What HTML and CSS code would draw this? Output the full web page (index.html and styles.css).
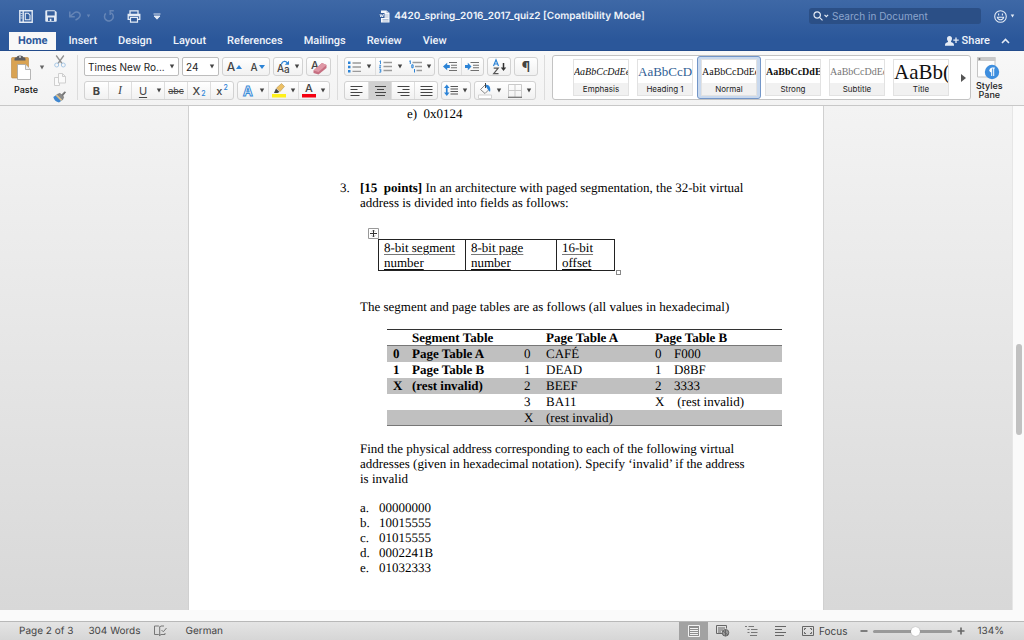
FILE: index.html
```html
<!DOCTYPE html>
<html lang="en">
<head>
<meta charset="utf-8">
<title>4420_spring_2016_2017_quiz2 [Compatibility Mode]</title>
<link rel="stylesheet" href="styles.css">
</head>
<body class="app">
<svg class="defs" width="0" height="0" aria-hidden="true">
  <symbol id="caret" viewBox="0 0 6 5"><path d="M0.8 0.5h4.4L3 4.5z" fill="currentColor"/></symbol>
</svg>

<header class="header">
  <div class="titlebar">
    <div class="quick">
      <button class="bare" aria-label="Document gallery"><svg width="14" height="13" viewBox="0 0 14 13" fill="none" stroke="#e4ebf5" stroke-width="1.4"><path d="M.8.8h12.4v11.4H.8zM4.2.8v11.4"/><path d="M6.3 3.2h2.9l1.8 1.9v4.7H6.3z" stroke-width="1.1"/><path d="M1.5 3.5h2M1.5 5.8h2M1.5 8h2" stroke-width=".8"/></svg></button>
      <button class="bare" aria-label="Save"><svg width="12" height="12" viewBox="0 0 12 12"><path d="M1.4.3h8.2L11.7 2v8.9a.8.8 0 0 1-.8.8H1.1a.8.8 0 0 1-.8-.8V1.3A1 1 0 0 1 1.4.3z" fill="#e4ebf5"/><path d="M2.2 1.2h7.5v4.2H2.2zM3 7.6h6v3.3H6.4V8.8H4.8v2.1H3z" fill="#365f9c"/></svg></button>
      <button class="bare dim" aria-label="Undo"><svg width="12" height="10" viewBox="0 0 12 10" fill="none" stroke="currentColor" stroke-width="1.5"><path d="M.8.5v5.200h5M1 5.500L5 2c2.500-1.800 6-.6 6.200 1.900.1 2-2 3.800-4.700 5.300"/></svg><svg width="5" height="4"><use href="#caret"/></svg></button>
      <button class="bare dim" aria-label="Repeat"><svg width="12" height="12" viewBox="0 0 12 12" fill="none" stroke="currentColor" stroke-width="1.500"><path d="M2.800 3.400a4.400 4.400 0 1 0 5.400-.6M10.800.8H7.200v4.200"/></svg></button>
      <button class="bare" aria-label="Print"><svg width="14" height="13" viewBox="0 0 14 13"><path d="M3 4V.8h8V4M1.200 4.300h11.600v5H1.200z" fill="none" stroke="#e4ebf5" stroke-width="1.300"/><path d="M1 4h12v2.300H1z" fill="#e4ebf5"/><path d="M3.500 7.500h7v4.700h-7z" fill="#315b9a" stroke="#e4ebf5" stroke-width="1.200"/></svg></button>
      <button class="bare" aria-label="Customize toolbar"><svg width="8" height="7" viewBox="0 0 8 7"><path d="M.5 1h7M1 3h6L4 6.200z" fill="#e4ebf5" stroke="#e4ebf5" stroke-width=".9"/></svg></button>
    </div>
    <h1 class="doc-title"><svg width="11" height="13" viewBox="0 0 11 13"><path d="M2 .5h5.500L10.500 3v9.500H2z" fill="#f4f7fb"/><path d="M7.500.5V3h3" fill="#aebfd8"/><path d="M5.500 5h4M5.500 7h4M3.500 9.500h6M3.500 11h6" stroke="#8fa5c4" stroke-width=".7"/><path d="M0 3h5.500v5H0z" fill="#315b9a"/><path d="M1 4l.8 3L2.700 4.600 3.600 7l.9-3" fill="none" stroke="#fff" stroke-width=".8"/></svg>4420_spring_2016_2017_quiz2 [Compatibility Mode]</h1>
    <div class="title-right">
      <label class="search"><svg width="16" height="10" viewBox="0 0 16 10" fill="none" stroke="#e4ebf5" stroke-width="1.200"><circle cx="4.200" cy="4" r="3.200"/><path d="M6.500 6.300l3 3M11.500 3.800l1.800 1.800 1.800-1.800"/></svg><input class="search-input" type="search" placeholder="Search in Document" aria-label="Search in Document"></label>
      <button class="bare smile" aria-label="Feedback"><svg width="13" height="13" viewBox="0 0 13 13" fill="none" stroke="#e4ebf5" stroke-width="1.100"><circle cx="6.500" cy="6.500" r="5.800"/><path d="M4.600 3.500v2M8.400 3.500v2M3.400 7.300c.8 3.200 5.400 3.200 6.200 0z"/></svg><svg width="5" height="4"><use href="#caret"/></svg></button>
    </div>
  </div>
  <nav class="tabs">
    <a class="tab tab-on" href="#home">Home</a><a class="tab" href="#insert">Insert</a><a class="tab" href="#design">Design</a><a class="tab" href="#layout">Layout</a><a class="tab" href="#references">References</a><a class="tab" href="#mailings">Mailings</a><a class="tab" href="#review">Review</a><a class="tab" href="#view">View</a>
    <button class="share"><svg width="14" height="10" viewBox="0 0 14 10"><path d="M4.500 0C6 0 7 1 7 2.600 7 4 6.300 4.800 6 5.200v.8c1.500.6 3 .9 3 3v.8H0V9c0-2.100 1.500-2.400 3-3v-.8C2.500 4.800 2 4 2 2.600 2 1 3 0 4.500 0z" fill="#e4ebf5"/><path d="M11 1.500v5.400M8.300 4.200h5.400" stroke="#e4ebf5" stroke-width="1.300"/></svg>Share</button>
    <button class="bare" aria-label="Collapse ribbon"><svg width="9" height="6" viewBox="0 0 9 6" fill="none" stroke="#e4ebf5" stroke-width="1.600"><path d="M1 5l3.500-3.500L8 5"/></svg></button>
  </nav>
</header>

<section class="ribbon" id="home" aria-label="Home">
  <div class="clip">
    <button class="paste"><svg width="20" height="25" viewBox="0 0 20 25"><rect x=".5" y="2.500" width="17" height="20.500" rx="1" fill="#d9a353" stroke="#bb8743" stroke-width=".6"/><path d="M3.500 5.500V3.800c0-.8.8-1.300 2-1.300C5.800-.2 12.200-.2 12.500 2.500c1.200 0 2 .5 2 1.300v1.700z" fill="#5b5c60"/><circle cx="9" cy="2" r=".9" fill="#ddd"/><path d="M6.500 9.500h8l5 5v10h-13z" fill="#fff" stroke="#a5a5a5" stroke-width=".8"/><path d="M14.500 9.500v5h5" fill="#eee" stroke="#a5a5a5" stroke-width=".8"/></svg>Paste</button>
    <button class="bare paste-more" aria-label="Paste options"><svg width="6" height="5"><use href="#caret"/></svg></button>
    <div class="clip-tools">
      <button class="bare" aria-label="Cut"><svg width="12" height="13" viewBox="0 0 12 13" fill="none"><path d="M2.200.5l5.800 8M9.800.5l-5.800 8" stroke="#929292" stroke-width="1.300"/><circle cx="2.700" cy="10" r="2" stroke="#a8c8e6"/><circle cx="9.300" cy="10" r="2" stroke="#a8c8e6"/></svg></button>
      <button class="bare" aria-label="Copy"><svg width="12" height="13" viewBox="0 0 12 13" fill="#fafafa" stroke="#cfcfcf"><path d="M.5 4.500h5v8h-5z"/><path d="M4.500.5h4l3 3v6.500h-7zM8.500.5v3h3"/></svg></button>
      <button class="bare" aria-label="Format painter"><svg width="13" height="12" viewBox="0 0 13 12"><path d="M8.500 4L11.800.7l.7.7L9.500 5" fill="#777" stroke="#666" stroke-width=".8"/><path d="M4 3.500l3-1.300 3.800 3.800L9.500 9z" fill="#8a8a8a" stroke="#666" stroke-width=".5"/><path d="M4 3.500L9.500 9 6 11.500C3 11 1 9 .3 6z" fill="#3f86cf"/><path d="M4 3.500L9.500 9 8 10 2.500 4.500z" fill="#e0c08a"/></svg></button>
    </div>
  </div>
  <div class="rows rule">
    <div class="row">
      <span class="combo combo-font"><select class="select" aria-label="Font"><option>Times New Ro...</option></select><svg class="combo-caret" width="6" height="5"><use href="#caret"/></svg></span>
      <span class="combo combo-size"><select class="select" aria-label="Font size"><option>24</option></select><svg class="combo-caret" width="6" height="5"><use href="#caret"/></svg></span>
      <div class="set"><button class="tool w23" aria-label="Grow font"><span class="glyph">A</span><svg width="6" height="4" viewBox="0 0 6 4"><path d="M0 4h6L3 0z" fill="#2b83d6"/></svg></button><button class="tool w23 plain" aria-label="Shrink font"><span class="glyph-s">A</span><svg width="6" height="4" viewBox="0 0 6 4"><path d="M0 0h6L3 4z" fill="#2b83d6"/></svg></button></div>
      <div class="set"><button class="tool w28" aria-label="Change case"><svg width="14" height="14" viewBox="0 0 14 14"><path d="M4.500 4C5.500.8 9 .8 10.300 3" fill="none" stroke="#2b83d6" stroke-width="1.300"/><path d="M12 .8v4H7.800z" fill="#2b83d6"/><text x="0" y="12" class="svg-text">A</text><text x="7" y="13" class="svg-text">a</text></svg><svg width="6" height="5"><use href="#caret"/></svg></button></div>
      <div class="set"><button class="tool w23" aria-label="Clear formatting"><svg width="18" height="16" viewBox="0 0 18 16"><text x="1" y="10" class="svg-text svg-text-l">A</text><path d="M3.500 11.500L12 4l4.500 2v3l-8 6.500-5-1.500z" fill="#c66f81"/><path d="M3.500 11.500L12 4l4.500 2-8 7z" fill="#df98a6"/></svg></button></div>
    </div>
    <div class="row">
      <div class="set"><button class="tool w23 bold">B</button><button class="tool w23 ital">I</button><button class="tool w23 und">U</button><button class="tool w10 plain" aria-label="Underline style"><svg width="6" height="5"><use href="#caret"/></svg></button><button class="tool w23 strike">abc</button><button class="tool w23 xs">X<span class="blue low">2</span></button><button class="tool w23 xs">x<span class="blue high">2</span></button></div>
      <div class="set"><button class="tool w30" aria-label="Text effects"><svg width="13" height="14" viewBox="0 0 13 14"><text x="1" y="12" class="fx">A</text></svg><svg width="6" height="5"><use href="#caret"/></svg></button><button class="tool w30" aria-label="Highlight"><svg width="14" height="15" viewBox="0 0 14 15"><path d="M0 11h14v3.500H0z" fill="#fff01c"/><path d="M2 10l2-4.500L7.500 9 5.500 10z" fill="#444"/><path d="M4.500 5L9.500.5l3 3L8 8.500z" fill="#edc064" stroke="#a98b4a" stroke-width=".5"/></svg><svg width="6" height="5"><use href="#caret"/></svg></button><button class="tool w31" aria-label="Font color"><svg width="14" height="15" viewBox="0 0 14 15"><path d="M0 11h14v3.500H0z" fill="#f5000f"/><text x="3" y="9" class="svg-text svg-text-l">A</text></svg><svg width="6" height="5"><use href="#caret"/></svg></button></div>
    </div>
  </div>
  <div class="rows rule">
    <div class="row">
      <div class="set"><button class="tool w30" aria-label="Bullets"><svg width="14" height="12" viewBox="0 0 14 12"><path d="M0 .5h2.500V3H0zM0 4.800h2.500v2.500H0zM0 9h2.500v2.500H0z" fill="#2b83d6"/><path d="M4.500 2H13M4.500 6H13M4.500 10.300H13" stroke="#9a9a9a" stroke-width="1.300"/></svg><svg width="6" height="5"><use href="#caret"/></svg></button><button class="tool w31" aria-label="Numbering"><svg width="14" height="13" viewBox="0 0 14 13"><path d="M.5 1.500L1.500.8V4M.3 5.300h1.500l-1.300 2.300H2M.3 9.200h1.500v3H.3M.8 10.700h1" fill="none" stroke="#2b83d6" stroke-width=".9"/><path d="M4.500 2.500H13M4.500 6.500H13M4.500 10.500H13" stroke="#9a9a9a" stroke-width="1.300"/></svg><svg width="6" height="5"><use href="#caret"/></svg></button><button class="tool w28 plain" aria-label="Multilevel list"><svg width="14" height="13" viewBox="0 0 14 13"><path d="M.3 1.300l1-.6V4M2.800 4.800h1.300v3H2.800zM5.500 9v3.500" fill="none" stroke="#2b83d6" stroke-width="1"/><path d="M3.500 2.500H13M6 6.500h7M7.500 10.500H13" stroke="#9a9a9a" stroke-width="1.300"/></svg><svg width="6" height="5"><use href="#caret"/></svg></button></div>
      <div class="set"><button class="tool w22 plain" aria-label="Decrease indent"><svg width="15" height="12" viewBox="0 0 15 12"><path d="M0 5.500L4.200 1.800V4h2.600v3H4.200v2.200z" fill="#2b83d6"/><path d="M6 1.500h8M8 4.200h6M8 6.800h6M6 9.500h8" stroke="#707070" stroke-width="1.100"/></svg></button><button class="tool w22" aria-label="Increase indent"><svg width="15" height="12" viewBox="0 0 15 12"><path d="M6.500 5.500L2.800 1.800V4H0v3h2.800v2.200z" fill="#2b83d6"/><path d="M5.500 1.500H14M8 4.200h6M8 6.800h6M5.500 9.500H14" stroke="#707070" stroke-width="1.100"/></svg></button></div>
      <div class="set"><button class="tool w22" aria-label="Sort"><svg width="15" height="16" viewBox="0 0 15 16"><path d="M1.500 7L4 .8 6.500 7M2.400 5h3.200" fill="none" stroke="#2b83d6" stroke-width="1.200"/><path d="M1.700 9.200h4.500l-4.500 5.500h4.800" fill="none" stroke="#555" stroke-width="1.200"/><path d="M11.500 4v6" stroke="#333" stroke-width="1.500"/><path d="M8.800 8.500h5.400l-2.700 3.500z" fill="#333"/></svg></button></div>
      <div class="set"><button class="tool w22 pil">¶</button></div>
    </div>
    <div class="row">
      <div class="set"><button class="tool w23" aria-label="Align left"><svg width="13" height="10" viewBox="0 0 13 10" stroke="#444" stroke-width="1"><path d="M.5.500h12M.5 3.500h7M.5 6.500h12M.5 9.500h9"/></svg></button><button class="tool w23 on" aria-label="Center"><svg width="13" height="10" viewBox="0 0 13 10" stroke="#444"><path d="M1 .5h11M3 3.500h7M1 6.500h11M2 9.500h9"/></svg></button><button class="tool w23" aria-label="Align right"><svg width="13" height="10" viewBox="0 0 13 10" stroke="#444"><path d="M.5.500h12M5.500 3.500h7M.5 6.500h12M3.500 9.500h9"/></svg></button><button class="tool w23" aria-label="Justify"><svg width="13" height="10" viewBox="0 0 13 10" stroke="#444"><path d="M.5.500h12M.5 3.500h12M.5 6.500h12M.5 9.500h12"/></svg></button></div>
      <div class="set"><button class="tool w28" aria-label="Line spacing"><svg width="15" height="13" viewBox="0 0 15 13"><path d="M0 4L2.800.5 5.500 4H3.600v4.500h1.900L2.800 12 0 8.500h1.900V4z" fill="#2b83d6"/><path d="M6.500 2.500H14M6.500 5H14M6.500 7.500H14M6.500 10H14" stroke="#555"/></svg><svg width="6" height="5"><use href="#caret"/></svg></button></div>
      <div class="set"><button class="tool w30" aria-label="Shading"><svg width="14" height="16" viewBox="0 0 14 16"><path d="M.5 12h13v3.500H.5z" fill="#fff" stroke="#d2d2d2"/><path d="M2.500 6.500L7 2l4.500 4L7 10.500z" fill="#fafafa" stroke="#888"/><path d="M7 2c4-1 6 2 5 7l-2.500-3z" fill="#2b83d6"/><path d="M7.500 0v5" stroke="#444"/></svg><svg width="6" height="5"><use href="#caret"/></svg></button><button class="tool w30 plain" aria-label="Borders"><svg width="14" height="14" viewBox="0 0 14 14" fill="none"><path d="M.5 13V.5h13V13M7 .5V13M.5 6.500h13" stroke="#c9c9c9"/><path d="M0 13.300h14" stroke="#777" stroke-width="1.300"/></svg><svg width="6" height="5"><use href="#caret"/></svg></button></div>
    </div>
  </div>
  <div class="styles rule">
    <div class="gallery">
      <button class="style"><span class="sample s-emph">AaBbCcDdEe</span><span class="cap">Emphasis</span></button>
      <button class="style"><span class="sample s-head">AaBbCcD</span><span class="cap">Heading 1</span></button>
      <button class="style style-on"><span class="sample">AaBbCcDdEe</span><span class="cap">Normal</span></button>
      <button class="style"><span class="sample s-strong">AaBbCcDdE</span><span class="cap">Strong</span></button>
      <button class="style"><span class="sample s-sub">AaBbCcDdEe</span><span class="cap">Subtitle</span></button>
      <button class="style"><span class="sample s-title">AaBb(</span><span class="cap">Title</span></button>
      <button class="bare more" aria-label="More styles"><svg width="5" height="8" viewBox="0 0 5 8"><path d="M0 0l5 4-5 4z" fill="#555"/></svg></button>
    </div>
    <button class="pane"><svg width="24" height="25" viewBox="0 0 24 25"><path d="M1.500 1.500h17.500v19.500H1.500z" fill="#fdfdfd" stroke="#c4c4c4"/><path d="M1 1h18.500v4H1z" fill="#c9c9c9"/><circle cx="3.500" cy="3" r="1" fill="#777"/><circle cx="16" cy="16" r="7.200" fill="#3e8ede"/><path d="M15.500 12h3.300M15.700 12v8M17.700 12v8" stroke="#fff" stroke-width="1"/><path d="M15.700 12a2.300 2.300 0 0 0 0 4.600z" fill="#fff"/></svg><span>Styles<br>Pane</span></button>
  </div>
</section>

<main class="work">
  <div class="canvas">
    <article class="page">
      <p class="answer">e)&ensp;0x0124</p>
      <div class="question"><span class="qnum">3.</span>
        <p class="para"><b>[15&nbsp; points]</b> In an architecture with paged segmentation, the 32-bit virtual<br>address is divided into fields as follows:</p>
      </div>
      <div class="fields-wrap">
        <svg class="handle" width="11" height="11" viewBox="0 0 11 11" fill="none"><path d="M.5.5h10v10H.5z" fill="#fff" stroke="#999"/><path d="M5.500 2v7M2 5.500h7" stroke="#333"/><path d="M4 3.500l1.500-1.500L7 3.500M4 7.500L5.500 9 7 7.500" stroke="#555" stroke-width=".7"/></svg>
        <table class="fields"><tbody><tr><td class="f1"><span class="u-soft">8-bit segment</span><br><span class="u-hard">number</span></td><td class="f2"><span class="u-soft">8-bit page</span><br><span class="u-hard">number</span></td><td class="f3"><span class="u-soft">16-bit</span><br><span class="u-hard">offset</span></td></tr></tbody></table>
        <span class="grip"></span>
      </div>
      <p class="para">The segment and page tables are as follows (all values in hexadecimal)</p>
      <table class="data">
        <colgroup><col class="c1"><col class="c2"><col class="c3"><col class="c4"><col class="c5"><col></colgroup>
        <thead><tr><th></th><th>Segment Table</th><th></th><th>Page Table A</th><th colspan="2">Page Table B</th></tr></thead>
        <tbody>
          <tr><th>0</th><th>Page Table A</th><td>0</td><td>CAFÉ</td><td>0</td><td>F000</td></tr>
          <tr><th>1</th><th>Page Table B</th><td>1</td><td>DEAD</td><td>1</td><td>D8BF</td></tr>
          <tr><th>X</th><th>(rest invalid)</th><td>2</td><td>BEEF</td><td>2</td><td>3333</td></tr>
          <tr><th></th><th></th><td>3</td><td>BA11</td><td>X</td><td>&nbsp;(rest invalid)</td></tr>
          <tr><th></th><th></th><td>X</td><td>(rest invalid)</td><td></td><td></td></tr>
        </tbody>
      </table>
      <p class="para">Find the physical address corresponding to each of the following virtual<br>addresses (given in hexadecimal notation). Specify ‘invalid’ if the address<br>is invalid</p>
      <div class="addresses">
        <span>a.</span><span>00000000</span>
        <span>b.</span><span>10015555</span>
        <span>c.</span><span>01015555</span>
        <span>d.</span><span>0002241B</span>
        <span>e.</span><span>01032333</span>
      </div>
    </article>
  </div>
  <div class="scroll"><span class="thumb"></span></div>
</main>
<div class="hscroll"></div>

<footer class="status">
  <span class="st-page">Page 2 of 3</span>
  <span class="st-words">304 Words</span>
  <button class="bare st-proof" aria-label="Proofing"><svg width="13" height="12" viewBox="0 0 13 12" fill="none" stroke="#777"><path d="M10 1H7L5.700 2 4.500 1H.5v8.500h4l1.200 1 1.300-1h4V8M5.700 2v9"/><path d="M7.500 5l1.800 1.800L12.500 3"/></svg></button>
  <span>German</span>
  <div class="views">
    <button class="view view-on" aria-label="Print layout"><svg width="12" height="12" viewBox="0 0 12 12"><path d="M.5.500h11v11H.5z" fill="#8d8d8d" stroke="#f2f2f2"/><path d="M2 3.500h8M2 5.500h8M2 7.500h8M2 9.500h8" stroke="#f2f2f2"/></svg></button>
    <button class="view" aria-label="Web layout"><svg width="14" height="12" viewBox="0 0 14 12" fill="none" stroke="#666"><path d="M.5.500h10v3M.5.500v8H6M2 3h7M2 5h5M2 7h3"/><circle cx="9.500" cy="7.800" r="3.300" fill="#999"/><path d="M7 6l5 4M9.500 4.500v6.600"/></svg></button>
    <button class="view" aria-label="Outline"><svg width="13" height="10" viewBox="0 0 13 10" stroke="#777" fill="none"><path d="M0 .5h2M3.500.500H9M2.500 3.500h2M6 3.500h6.500M2.500 6.500h2M6 6.500h6.500M5 9.500h7"/></svg></button>
    <button class="view" aria-label="Draft"><svg width="12" height="10" viewBox="0 0 12 10" stroke="#666"><path d="M0 .5h11M0 3.500h7M0 6.500h11M0 9.500h9"/></svg></button>
  </div>
  <button class="focus"><svg width="12" height="10" viewBox="0 0 12 10" fill="none" stroke="#666"><path d="M.5.500h11v9H.5z"/><path d="M2.500 4V2.500H4M8 2.500h1.500V4M2.500 6v1.500H4M8 7.500h1.500V6" /></svg>Focus</button>
  <div class="zoom">
    <button class="bare" aria-label="Zoom out"><svg width="8" height="8" viewBox="0 0 8 8"><path d="M.5 4h7" stroke="#666" stroke-width="1.600"/></svg></button>
    <input class="slider" type="range" min="0" max="100" value="54" aria-label="Zoom">
    <button class="bare" aria-label="Zoom in"><svg width="8" height="8" viewBox="0 0 8 8"><path d="M.5 4h7M4 .5v7" stroke="#666" stroke-width="1.600"/></svg></button>
  </div>
  <span class="pct">134%</span>
</footer>
</body>
</html>
```
FILE: styles.css
```css
* { box-sizing: border-box; }
.app {
  margin: 0;
  height: 100vh;
  display: flex;
  flex-direction: column;
  overflow: hidden;
  font: 10px/12px Inter, Roboto, sans-serif;
  color: #222;
  background: #fafafa;
  text-rendering: geometricPrecision;
}
.defs { position: absolute; }
button, input, select { font: inherit; color: inherit; margin: 0; }
svg { flex: none; }
.bare { display: flex; align-items: center; padding: 0; border: 0; background: none; }

/* Title bar and tabs */
.header {
  flex: none;
  color: #f0f4fa;
  background: linear-gradient(#3e68a6, #2b579a 80%);
  border-bottom: 1px solid #234c8c;
}
.titlebar {
  height: 32px;
  display: grid;
  grid-template-columns: 1fr auto 1fr;
  align-items: center;
  padding: 0 19px;
}
.quick { display: flex; align-items: center; gap: 12px; }
.dim { color: #6585b6; gap: 5px; }
.doc-title {
  margin: 0;
  display: flex;
  align-items: center;
  gap: 4px;
  font-size: 10px;
  font-weight: 600;
  white-space: nowrap;
}
.title-right { display: flex; justify-content: flex-end; align-items: center; gap: 13px; margin-right: -10px; }
.search {
  display: flex;
  align-items: center;
  gap: 3px;
  width: 172px;
  height: 16px;
  padding-left: 4px;
  border-radius: 3px;
  background: #2b4f86;
}
.search-input {
  flex: 1;
  min-width: 0;
  padding: 0;
  border: 0;
  background: none;
  outline: 0;
}
.search-input::placeholder { color: #8ba5cd; opacity: 1; }
.smile { gap: 3px; color: #e4ebf5; }
.tabs {
  height: 18px;
  display: flex;
  align-items: flex-end;
  padding: 0 14px 0 9px;
  font: 500 11px/18px Roboto, Inter, sans-serif;
}
.tab {
  padding: 0 10px 0 11px;
  color: inherit;
  text-decoration: none;
}
.tab-on { padding: 0 9px; margin-right: 1px; height: 18px; color: #2b579a; font-weight: 700; background: #f8f8f8; }
.tabs .bare { height: 18px; }
.share {
  display: flex;
  align-items: center;
  gap: 3px;
  height: 18px;
  margin: 0 11px 0 auto;
  padding: 0;
  border: 0;
  background: none;
}

/* Ribbon */
.ribbon {
  flex: none;
  display: flex;
  background: linear-gradient(#f8f8f8, #f3f3f3);
  border-bottom: 1px solid #c8c8c8;
}
.clip { flex: none; display: flex; align-items: flex-start; width: 77px; padding: 4px 0 0 11px; }
.paste {
  width: 28px;
  display: flex;
  flex-direction: column;
  align-items: flex-start;
  gap: 4px;
  padding: 0;
  border: 0;
  background: none;
  font: 500 9px/12px Inter, sans-serif;
  color: #111;
  text-indent: 3px;
}
.paste-more { height: 25px; color: #666; }
.clip-tools { display: flex; flex-direction: column; align-items: center; gap: 5px; margin-left: 8px; }
.rule { margin: 4px 0 5px; border-left: 1px solid #dcdcdc; padding: 2px 6px 0; }
.rows { flex: none; display: flex; flex-direction: column; gap: 5px; }
.row { display: flex; gap: 3px; height: 19px; }
.combo {
  display: grid;
  align-items: center;
  height: 19px;
  border: 1px solid #bdbdbd;
  border-radius: 2px;
  background: #fff;
}
.select {
  grid-area: 1 / 1;
  width: 100%;
  padding: 0 0 0 3px;
  border: 0;
  background: none;
  appearance: none;
  font-size: 10px;
}
.combo-caret { grid-area: 1 / 1; justify-self: end; margin-right: 3px; color: #444; }
.combo-font { width: 95px; }
.combo-size { width: 37px; }
.set {
  display: flex;
  border: 1px solid #d2d2d2;
  border-radius: 3px;
  background: linear-gradient(#fff, #f1f1f1);
}
.tool {
  display: flex;
  align-items: center;
  justify-content: center;
  gap: 1px;
  padding: 0;
  border: 0;
  border-left: 1px solid #dedede;
  background: none;
  color: #444;
  white-space: nowrap;
}
.tool svg { overflow: visible; }
.tool:first-child, .plain { border-left: 0; }
.on { background: #d0d0d0; }
.w10 { width: 10px; }
.w22 { width: 22px; }
.w23 { width: 23px; }
.w28 { width: 28px; gap: 3px; }
.w30 { width: 30px; gap: 4px; }
.w31 { width: 31px; gap: 4px; }
.glyph { font-size: 12px; font-weight: 500; }
.glyph-s { font-size: 10px; font-weight: 500; }
.svg-text { font: 500 10px Inter, sans-serif; fill: #444; }
.svg-text-l { font-size: 11px; }
.fx { font: 700 13px Inter, sans-serif; fill: #fff; stroke: #3b8bd8; stroke-width: 1px; }
.bold { font-weight: 700; font-size: 11px; }
.ital { font: italic 12px "Liberation Serif", serif; }
.und { font-size: 11px; text-decoration: underline; text-underline-offset: 2px; }
.strike { font-size: 9px; text-decoration: line-through; }
.xs { font-size: 11px; font-weight: 500; }
.blue { font-size: 7px; line-height: 8px; color: #2b83d6; }
.low { align-self: flex-end; margin-bottom: 1px; }
.high { align-self: flex-start; margin-top: 2px; }
.pil { font-size: 14px; font-weight: 600; }

.styles { flex: 1; min-width: 0; display: flex; gap: 4px; padding: 0 0 0 7px; }
.gallery {
  flex: 1;
  min-width: 0;
  display: flex;
  align-items: flex-end;
  padding-left: 16px;
  border: 1px solid #c3c3c3;
  border-radius: 3px;
  background: #fff;
}
.style {
  flex: none;
  width: 64px;
  height: 43px;
  display: flex;
  flex-direction: column;
  padding: 2px 3px;
  border: 1px solid transparent;
  border-radius: 3px;
  background: none;
}
.style-on { background: #c9d9ee; border-color: #7396c8; }
.sample {
  width: 100%;
  height: 25px;
  overflow: hidden;
  border: 1px solid #e2e2e2;
  border-bottom: 0;
  background: #fff;
  color: #111;
  font: 10px/24px "Liberation Serif", serif;
  text-align: left;
  white-space: nowrap;
}
.cap {
  width: 100%;
  height: 13px;
  border: 1px solid #e2e2e2;
  border-top: 0;
  background: #f1f1f1;
  font-size: 8px;
  line-height: 12px;
}
.s-emph { font-style: italic; }
.s-head { font-size: 13px; color: #2f5e95; }
.s-strong { font-weight: 700; }
.s-sub { font-size: 10px; color: #777; }
.s-title { font-size: 21px; }
.more { align-self: center; margin: 0 4px 0 auto; }
.pane {
  flex: none;
  width: 49px;
  display: flex;
  flex-direction: column;
  align-items: flex-start;
  padding: 1px 0 0 1px;
  border: 0;
  background: none;
  font: 500 9px/9px Inter, sans-serif;
  color: #222;
}

/* Document */
.work { flex: 1; min-height: 0; display: flex; }
.canvas {
  flex: 1;
  display: flex;
  justify-content: center;
  overflow: hidden;
  background: linear-gradient(#f3f3f3, #d8d8d8);
}
.page {
  width: 636px;
  padding: 0 60px 0 171px;
  background: #fff;
  border: solid #d0d0d0;
  border-width: 0 1px;
  font: 13px/15px "Liberation Serif", serif;
  color: #000;
  white-space: nowrap;
}
.para { margin: 0; }
.answer { margin: 0 0 59px 47px; }
.question { display: flex; margin-left: -20px; }
.qnum { flex: none; width: 20px; }
.fields-wrap { position: relative; display: table; margin: 29px 0 28px 18px; }
.handle { position: absolute; left: -10px; top: -11px; }
.grip { position: absolute; right: -6px; bottom: -4px; width: 5px; height: 5px; border: 1px solid #888; background: #fff; }
.fields { border-collapse: collapse; }
.fields td { padding: 0 5px; border: 1px solid #222; }
.f1 { width: 87px; }
.f2 { width: 91px; }
.f3 { width: 58px; }
.u-soft { text-decoration: underline 1px #777; text-underline-offset: 2px; }
.u-hard { text-decoration: underline 1px #111; text-underline-offset: 2px; }
.data {
  width: 395px;
  margin: 15px 0 15px 27px;
  table-layout: fixed;
  border-collapse: collapse;
  border-top: 1px solid #333;
  border-bottom: 1px solid #777;
}
.data th, .data td { height: 16px; padding: 0; text-align: left; line-height: 15px; }
.data th:first-child { padding-left: 6px; }
.data thead { border-bottom: 1px solid #777; }
.data tbody tr:nth-child(odd) { background: #c0c0c0; }
.c1 { width: 25px; }
.c2 { width: 112px; }
.c3 { width: 22px; }
.c4 { width: 109px; }
.c5 { width: 19px; }
.addresses { display: grid; grid-template-columns: 19px auto; justify-content: start; margin-top: 14px; }
.scroll { width: 12px; padding-left: 3px; background: #fafafa; border-left: 1px solid #e6e6e6; }
.thumb { display: block; width: 6px; height: 18%; margin-top: 238px; border-radius: 3px; background: #c1c1c1; }
.hscroll { flex: none; height: 11px; background: #fafafa; }

/* Status bar */
.status {
  flex: none;
  height: 19px;
  display: flex;
  align-items: center;
  padding: 0 20px 0 19px;
  border-top: 1px solid #b8b8b8;
  background: linear-gradient(#e4e4e4, #d6d6d6);
  color: #444;
}
.st-page { margin-right: 15px; }
.st-words { margin-right: 14px; }
.st-proof { margin-right: 18px; }
.views { display: flex; align-self: stretch; margin-left: auto; }
.view { width: 29px; display: flex; align-items: center; justify-content: center; padding: 0; border: 0; background: none; }
.view-on { background: #a2a2a2; }
.focus { display: flex; align-items: center; gap: 5px; margin: 0 13px 0 7px; padding: 0; border: 0; background: none; }
.zoom { display: flex; align-items: center; gap: 5px; margin-right: 12px; }
.slider { width: 79px; height: 10px; appearance: none; background: none; }
.slider::-webkit-slider-runnable-track { height: 3px; border-radius: 2px; background: #999; }
.slider::-webkit-slider-thumb { appearance: none; width: 9px; height: 9px; margin-top: -3px; border-radius: 50%; background: #fff; box-shadow: 0 0 1px #888; }
```
